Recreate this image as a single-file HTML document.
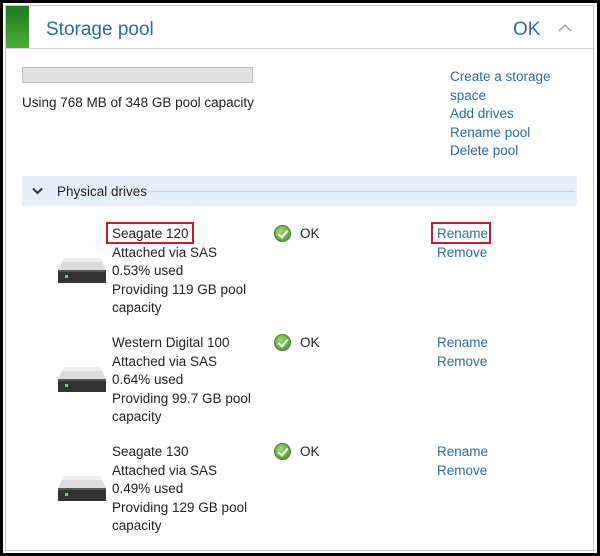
<!DOCTYPE html><html><head><style>
*{margin:0;padding:0;box-sizing:border-box}
body{width:600px;height:556px;background:#000;position:relative;font-family:"Liberation Sans",sans-serif;font-size:13.5px;color:#222;overflow:hidden}
.in{position:absolute;left:3px;top:3px;width:594px;height:550px;background:#fff}
.p{position:absolute;left:5px;top:5px;width:589px;height:546px;border:1px solid #c8c8c8;background:#fff}
.a{position:absolute;white-space:nowrap;line-height:18.5px}
.l{color:#2b6ca5}
.g{position:absolute;left:6px;top:6px;width:23px;height:43px;background:linear-gradient(#1e7a1e,#4cae3a)}
.box{position:absolute;border:2px solid #d0182a}
.ok{position:absolute;width:17px;height:17px;border-radius:50%;background:radial-gradient(circle at 40% 35%,#9fdc6a,#3d8f1f);border:1px solid #4a7a3a}
.ok:after{content:"";position:absolute;left:5px;top:2px;width:4px;height:8px;border:solid #fff;border-width:0 2px 2px 0;transform:rotate(40deg)}
.d{position:absolute;width:50px;height:27px}
</style></head><body><div class="in"></div><div class="p"></div>
<div class="g"></div>
<div style="position:absolute;left:6px;top:48px;width:587px;height:1px;background:#d4d4d4"></div>
<div class="a l" style="left:46px;top:18px;font-size:19px;line-height:24px">Storage pool</div>
<div class="a l" style="left:513px;top:18px;font-size:19px;line-height:24px">OK</div>
<svg style="position:absolute;left:558px;top:23px" width="14" height="9"><path d="M1 8L7 2L13 8" stroke="#999" stroke-width="1.3" fill="none"/></svg>
<div style="position:absolute;left:22px;top:67px;width:231px;height:16px;background:#e1e1e1;border:1px solid #c2c2c2"></div>
<div class="a" style="left:22px;top:94px">Using 768 MB of 348 GB pool capacity</div>
<div class="a l" style="left:450px;top:68px">Create a storage<br>space<br>Add drives<br>Rename pool<br>Delete pool</div>
<div style="position:absolute;left:22px;top:176px;width:555px;height:30px;background:#e6f0fa"></div>
<div style="position:absolute;left:148px;top:191px;width:427px;height:1px;background:#c5d0da"></div>
<svg style="position:absolute;left:32px;top:187px" width="11" height="8"><path d="M1 1.5L5.5 6L10 1.5" stroke="#333" stroke-width="2" fill="none"/></svg>
<div class="a" style="left:57px;top:183px">Physical drives</div>

<div class="a" style="left:112px;top:225px">Seagate 120<br>Attached via SAS<br>0.53% used<br>Providing 119 GB pool<br>capacity</div>
<div class="box" style="left:106px;top:222px;width:88px;height:22px"></div>
<div class="a" style="left:112px;top:334px">Western Digital 100<br>Attached via SAS<br>0.64% used<br>Providing 99.7 GB pool<br>capacity</div>
<div class="a" style="left:112px;top:443px">Seagate 130<br>Attached via SAS<br>0.49% used<br>Providing 129 GB pool<br>capacity</div>

<div class="ok" style="left:274px;top:225px"></div><div class="a" style="left:300px;top:225px">OK</div>
<div class="ok" style="left:274px;top:334px"></div><div class="a" style="left:300px;top:334px">OK</div>
<div class="ok" style="left:274px;top:443px"></div><div class="a" style="left:300px;top:443px">OK</div>

<div class="a l" style="left:437px;top:225px">Rename<br>Remove</div>
<div class="box" style="left:431px;top:222px;width:60px;height:22px"></div>
<div class="a l" style="left:437px;top:334px">Rename<br>Remove</div>
<div class="a l" style="left:437px;top:443px">Rename<br>Remove</div>

<svg class="d" style="left:57px;top:257px" viewBox="0 0 50 27"><path d="M7 1H43L49 13H1Z" fill="#dcdcdc"/><path d="M7 1H43L45 5H5Z" fill="#eee"/><rect x="1" y="13" width="48" height="13" fill="#333"/><rect x="1" y="13" width="48" height="2" fill="#555"/><rect x="8" y="18" width="3" height="3" fill="#5d5"/></svg>
<svg class="d" style="left:57px;top:366px" viewBox="0 0 50 27"><path d="M7 1H43L49 13H1Z" fill="#dcdcdc"/><path d="M7 1H43L45 5H5Z" fill="#eee"/><rect x="1" y="13" width="48" height="13" fill="#333"/><rect x="1" y="13" width="48" height="2" fill="#555"/><rect x="8" y="18" width="3" height="3" fill="#5d5"/></svg>
<svg class="d" style="left:57px;top:475px" viewBox="0 0 50 27"><path d="M7 1H43L49 13H1Z" fill="#dcdcdc"/><path d="M7 1H43L45 5H5Z" fill="#eee"/><rect x="1" y="13" width="48" height="13" fill="#333"/><rect x="1" y="13" width="48" height="2" fill="#555"/><rect x="8" y="18" width="3" height="3" fill="#5d5"/></svg>
</body></html>
